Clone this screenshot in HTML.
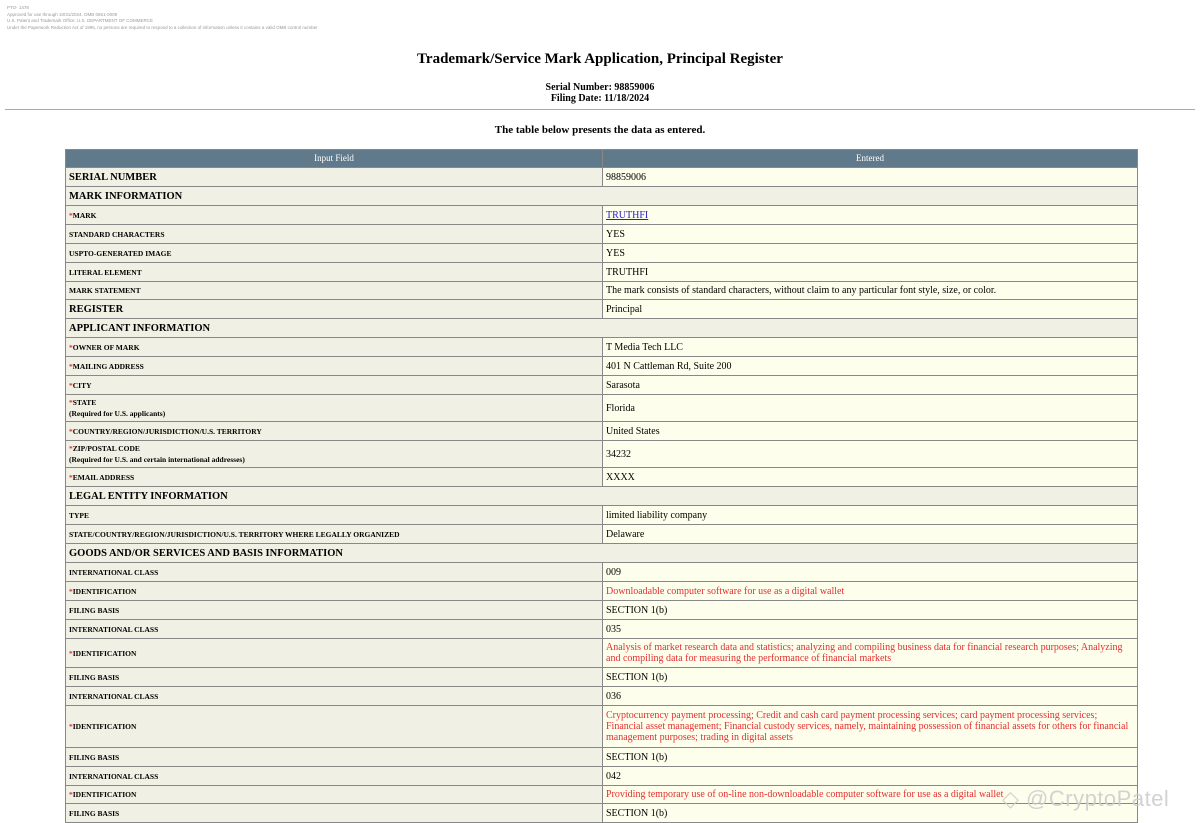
<!DOCTYPE html>
<html><head><meta charset="utf-8"><style>
body{margin:0;background:#fff;font-family:"Liberation Serif",serif;width:1200px;height:822px;overflow:hidden;position:relative}
.top{position:absolute;left:7px;top:5px;font-family:"Liberation Sans",sans-serif;font-size:4.5px;color:#999;line-height:6.5px}
h1{position:absolute;top:51px;left:0;width:1200px;text-align:center;font-size:15px;margin:0;font-weight:bold}
.sn{position:absolute;top:82px;left:0;width:1200px;text-align:center;font-size:10px;font-weight:bold;line-height:11px}
hr{position:absolute;top:109px;left:5px;width:1190px;margin:0;border:0;border-top:1px solid #aaa}
.cap{position:absolute;top:124px;left:0;width:1200px;text-align:center;font-size:11px;font-weight:bold}
table{position:absolute;left:65px;top:149px;width:1073px;border-collapse:collapse;table-layout:fixed}
td,th{border:1px solid #888;padding:0 3px;font-size:10px;line-height:11px;vertical-align:middle}
th{background:#60798b;color:#fff;font-weight:normal;height:17px;font-size:9px}
td.l{background:#f1f0e4;font-weight:bold;font-size:7.5px}
td.r{background:#fefeec}
td.s{background:#f1f0e4;font-weight:bold;font-size:10.5px}
.red{color:#e23030}.st{color:#e03030}
a{color:#2222cc}
</style></head><body>
<div class="top">PTO- 1478<br>Approved for use through 10/31/2024. OMB 0651-0009<br>U.S. Patent and Trademark Office; U.S. DEPARTMENT OF COMMERCE<br>Under the Paperwork Reduction Act of 1995, no persons are required to respond to a collection of information unless it contains a valid OMB control number</div>
<h1>Trademark/Service Mark Application, Principal Register</h1>
<div class="sn">Serial Number: 98859006<br>Filing Date: 11/18/2024</div>
<hr>
<div class="cap">The table below presents the data as entered.</div>
<table>
<col style="width:537px"><col>
<tr><th>Input Field</th><th>Entered</th></tr>
<tr style="height:19px"><td class="s">SERIAL NUMBER</td><td class="r">98859006</td></tr>
<tr style="height:19px"><td class="s" colspan="2">MARK INFORMATION</td></tr>
<tr style="height:19px"><td class="l"><span class="st">*</span>MARK</td><td class="r"><a href="#">TRUTHFI</a></td></tr>
<tr style="height:19px"><td class="l">STANDARD CHARACTERS</td><td class="r">YES</td></tr>
<tr style="height:19px"><td class="l">USPTO-GENERATED IMAGE</td><td class="r">YES</td></tr>
<tr style="height:19px"><td class="l">LITERAL ELEMENT</td><td class="r">TRUTHFI</td></tr>
<tr style="height:18px"><td class="l">MARK STATEMENT</td><td class="r">The mark consists of standard characters, without claim to any particular font style, size, or color.</td></tr>
<tr style="height:19px"><td class="s">REGISTER</td><td class="r">Principal</td></tr>
<tr style="height:19px"><td class="s" colspan="2">APPLICANT INFORMATION</td></tr>
<tr style="height:19px"><td class="l"><span class="st">*</span>OWNER OF MARK</td><td class="r">T Media Tech LLC</td></tr>
<tr style="height:19px"><td class="l"><span class="st">*</span>MAILING ADDRESS</td><td class="r">401 N Cattleman Rd, Suite 200</td></tr>
<tr style="height:19px"><td class="l"><span class="st">*</span>CITY</td><td class="r">Sarasota</td></tr>
<tr style="height:27px"><td class="l"><span class="st">*</span>STATE<br>(Required for U.S. applicants)</td><td class="r">Florida</td></tr>
<tr style="height:19px"><td class="l"><span class="st">*</span>COUNTRY/REGION/JURISDICTION/U.S. TERRITORY</td><td class="r">United States</td></tr>
<tr style="height:27px"><td class="l"><span class="st">*</span>ZIP/POSTAL CODE<br>(Required for U.S. and certain international addresses)</td><td class="r">34232</td></tr>
<tr style="height:19px"><td class="l"><span class="st">*</span>EMAIL ADDRESS</td><td class="r">XXXX</td></tr>
<tr style="height:19px"><td class="s" colspan="2">LEGAL ENTITY INFORMATION</td></tr>
<tr style="height:19px"><td class="l">TYPE</td><td class="r">limited liability company</td></tr>
<tr style="height:19px"><td class="l">STATE/COUNTRY/REGION/JURISDICTION/U.S. TERRITORY WHERE LEGALLY ORGANIZED</td><td class="r">Delaware</td></tr>
<tr style="height:19px"><td class="s" colspan="2">GOODS AND/OR SERVICES AND BASIS INFORMATION</td></tr>
<tr style="height:19px"><td class="l">INTERNATIONAL CLASS</td><td class="r">009</td></tr>
<tr style="height:19px"><td class="l"><span class="st">*</span>IDENTIFICATION</td><td class="r red">Downloadable computer software for use as a digital wallet</td></tr>
<tr style="height:19px"><td class="l">FILING BASIS</td><td class="r">SECTION 1(b)</td></tr>
<tr style="height:19px"><td class="l">INTERNATIONAL CLASS</td><td class="r">035</td></tr>
<tr style="height:29px"><td class="l"><span class="st">*</span>IDENTIFICATION</td><td class="r red">Analysis of market research data and statistics; analyzing and compiling business data for financial research purposes; Analyzing and compiling data for measuring the performance of financial markets</td></tr>
<tr style="height:19px"><td class="l">FILING BASIS</td><td class="r">SECTION 1(b)</td></tr>
<tr style="height:19px"><td class="l">INTERNATIONAL CLASS</td><td class="r">036</td></tr>
<tr style="height:42px"><td class="l"><span class="st">*</span>IDENTIFICATION</td><td class="r red">Cryptocurrency payment processing; Credit and cash card payment processing services; card payment processing services;<br>Financial asset management; Financial custody services, namely, maintaining possession of financial assets for others for financial management purposes; trading in digital assets</td></tr>
<tr style="height:19px"><td class="l">FILING BASIS</td><td class="r">SECTION 1(b)</td></tr>
<tr style="height:19px"><td class="l">INTERNATIONAL CLASS</td><td class="r">042</td></tr>
<tr style="height:18px"><td class="l"><span class="st">*</span>IDENTIFICATION</td><td class="r red">Providing temporary use of on-line non-downloadable computer software for use as a digital wallet</td></tr>
<tr style="height:19px"><td class="l">FILING BASIS</td><td class="r">SECTION 1(b)</td></tr>
</table>
<div style="position:absolute;left:1002px;top:786px;font-family:'Liberation Sans',sans-serif;font-size:22px;color:rgba(205,205,205,0.9);white-space:nowrap;letter-spacing:0.5px">◇ @CryptoPatel</div>
</body></html>
